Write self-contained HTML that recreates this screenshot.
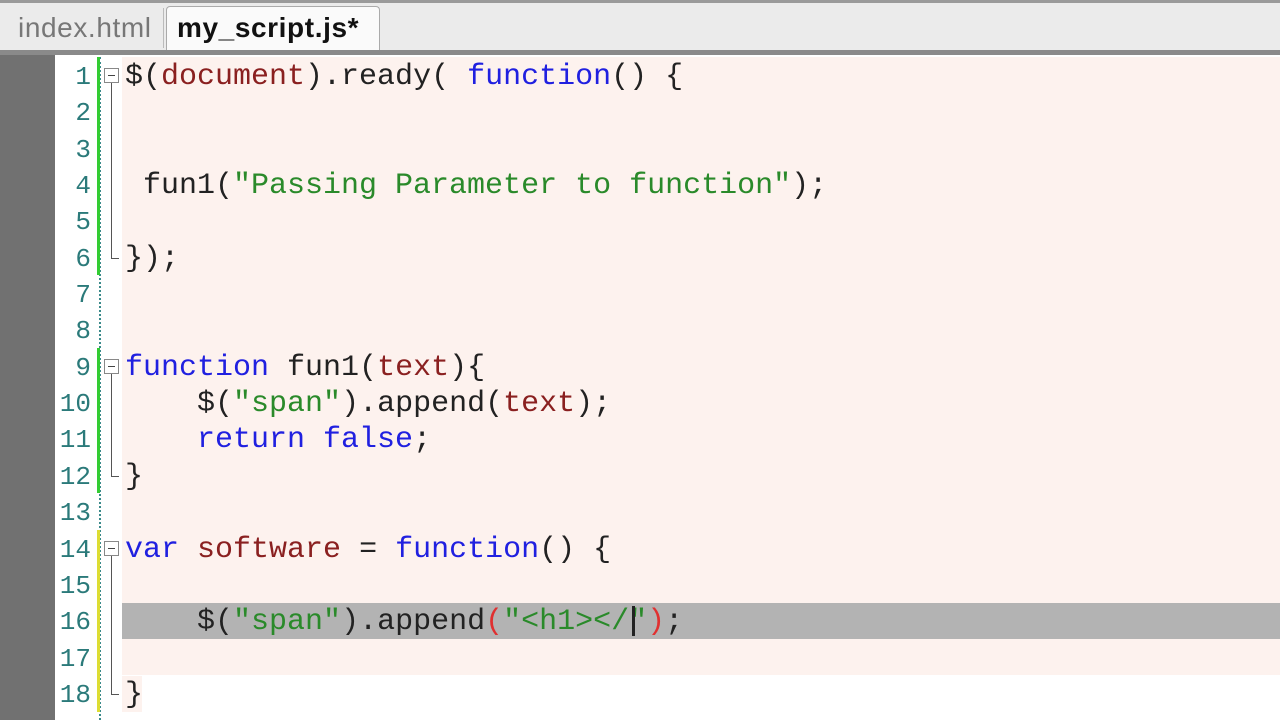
<!DOCTYPE html>
<html><head><style>
body{margin:0;width:1280px;height:720px;overflow:hidden;background:#fff;position:relative;font-family:"Liberation Mono",monospace}
.top{position:absolute;left:0;top:0;width:1280px;height:52px;background:#ebebeb;border-top:3px solid #9a9a9a;box-sizing:border-box}
.tab{position:absolute;font-family:"Liberation Sans",sans-serif;font-size:28px;top:12px;letter-spacing:0.6px}
.sep{position:absolute;left:0;top:50px;width:1280px;height:5px;background:#8a8a8a}
.lg{position:absolute;left:0;top:55px;width:55px;height:665px;background:#717171}
.pink{position:absolute;left:122px;top:57px;width:1158px;height:618px;background:#fdf2ee}
.hl{position:absolute;left:122px;top:603px;width:1158px;height:36px;background:#b3b3b3}
.num{position:absolute;left:55px;width:36px;text-align:right;font-size:26px;color:#2b7a7a;line-height:36px;margin-top:2px}
.ln{position:absolute;left:125px;font-size:30px;line-height:36px;white-space:pre;color:#222;margin-top:2px}
.k{color:#2020e0}.s{color:#2a8a2a}.v{color:#8a2020}.r{color:#e03030}
.bar{position:absolute;left:97px;width:3px}
.dot{position:absolute;left:99px;top:57px;height:663px;border-left:2px dotted #3a8a8a}
.fold{position:absolute;left:104px;width:15px;height:15px;border:1px solid #888;background:#fff;box-sizing:border-box}
.fold:after{content:"";position:absolute;left:3px;top:6px;width:7px;height:1px;background:#444}
.vl{position:absolute;left:111px;width:1px;background:#555}
.el{position:absolute;left:111px;width:8px;height:1px;background:#555}
</style></head><body>
<div class="top"></div>
<div class="tab" style="left:18px;color:#777">index.html</div>
<div style="position:absolute;left:163px;top:8px;width:1px;height:40px;background:#bbb"></div>
<div style="position:absolute;left:166px;top:6px;width:212px;height:46px;background:#fafafa;border:1px solid #aaa;border-bottom:none;border-radius:4px 4px 0 0"></div>
<div class="tab" style="left:177px;font-weight:bold;color:#111">my_script.js*</div>
<div class="sep"></div>
<div class="lg"></div>
<div class="pink"></div>
<div style="position:absolute;left:122px;top:676px;width:20px;height:36px;background:#fdf2ee"></div>
<div class="hl"></div>
<div class="dot"></div>
<div class="bar" style="top:57px;height:218px;background:#3c3"></div>
<div class="bar" style="top:348px;height:145px;background:#3c3"></div>
<div class="bar" style="top:530px;height:182px;background:#dd3"></div>
<div class="fold" style="top:68px"></div><div class="vl" style="top:83px;height:175px"></div><div class="el" style="top:258px"></div>
<div class="fold" style="top:359px"></div><div class="vl" style="top:374px;height:102px"></div><div class="el" style="top:476px"></div>
<div class="fold" style="top:541px"></div><div class="vl" style="top:556px;height:138px"></div><div class="el" style="top:694px"></div>
<div class="num" style="top:57px">1</div><div class="num" style="top:93px">2</div><div class="num" style="top:130px">3</div><div class="num" style="top:166px">4</div><div class="num" style="top:202px">5</div><div class="num" style="top:239px">6</div><div class="num" style="top:275px">7</div><div class="num" style="top:311px">8</div><div class="num" style="top:348px">9</div><div class="num" style="top:384px">10</div><div class="num" style="top:420px">11</div><div class="num" style="top:457px">12</div><div class="num" style="top:493px">13</div><div class="num" style="top:530px">14</div><div class="num" style="top:566px">15</div><div class="num" style="top:602px">16</div><div class="num" style="top:639px">17</div><div class="num" style="top:675px">18</div>
<div class="ln" style="top:57px">$(<span class="v">document</span>).ready( <span class="k">function</span>() {</div>
<div class="ln" style="top:166px;left:143px">fun1(<span class="s">"Passing Parameter to function"</span>);</div>
<div class="ln" style="top:239px">});</div>
<div class="ln" style="top:348px"><span class="k">function</span> fun1(<span class="v">text</span>){</div>
<div class="ln" style="top:384px">    $(<span class="s">"span"</span>).append(<span class="v">text</span>);</div>
<div class="ln" style="top:420px">    <span class="k">return false</span>;</div>
<div class="ln" style="top:457px">}</div>
<div class="ln" style="top:530px"><span class="k">var</span> <span class="v">software</span> = <span class="k">function</span>() {</div>
<div class="ln" style="top:602px">    $(<span class="s">"span"</span>).append<span class="r">(</span><span class="s">"&lt;h1&gt;&lt;/"</span><span class="r">)</span>;</div>
<div style="position:absolute;left:632px;top:606px;width:3px;height:30px;background:#222"></div>
<div class="ln" style="top:675px">}</div>
</body></html>
